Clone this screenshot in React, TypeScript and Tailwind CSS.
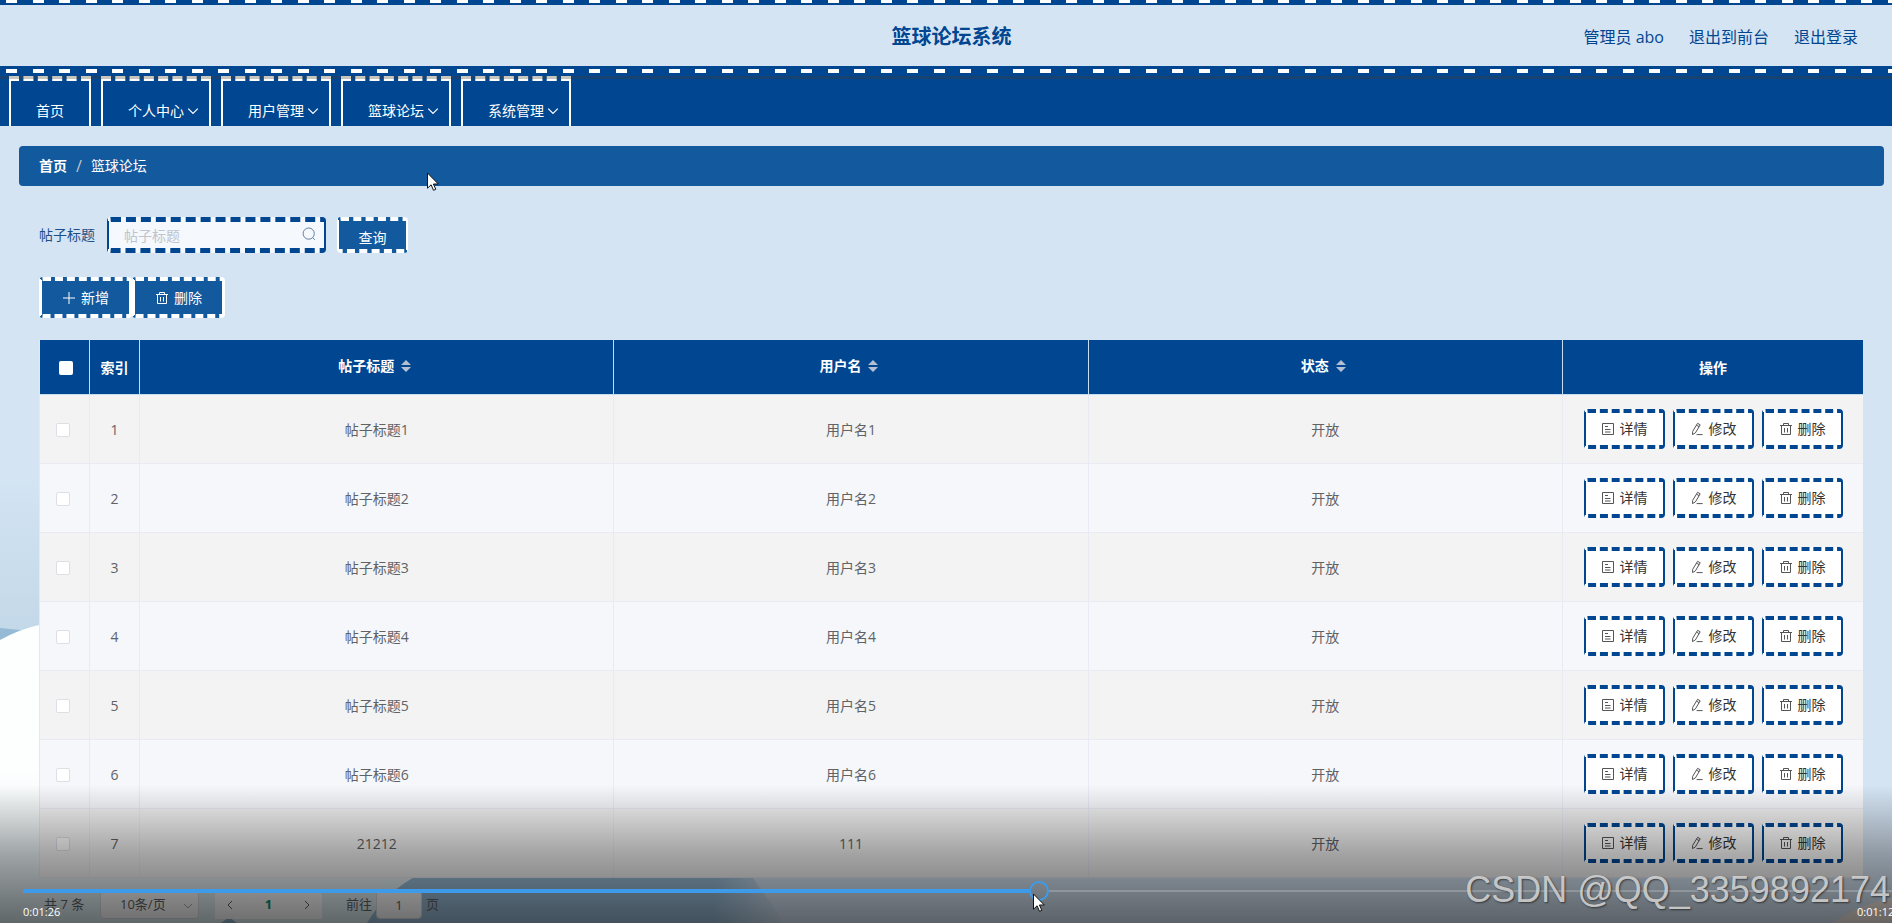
import React from 'react';

const menus = [
  { label: '首页', children: false },
  { label: '个人中心', children: true },
  { label: '用户管理', children: true },
  { label: '篮球论坛', children: true },
  { label: '系统管理', children: true },
];

const rows = [
  { id: 1, title: '帖子标题1', user: '用户名1', status: '开放' },
  { id: 2, title: '帖子标题2', user: '用户名2', status: '开放' },
  { id: 3, title: '帖子标题3', user: '用户名3', status: '开放' },
  { id: 4, title: '帖子标题4', user: '用户名4', status: '开放' },
  { id: 5, title: '帖子标题5', user: '用户名5', status: '开放' },
  { id: 6, title: '帖子标题6', user: '用户名6', status: '开放' },
  { id: 7, title: '21212', user: '111', status: '开放' },
];

const sortable = ['帖子标题', '用户名', '状态'];

type IconProps = { className?: string };

const ChevronIcon = ({ className }: IconProps) => (
  <svg viewBox="0 0 10 10" fill="none" stroke="currentColor" className={className}>
    <path d="M1 3l4 4 4-4" />
  </svg>
);

const SearchIcon = ({ className }: IconProps) => (
  <svg viewBox="0 0 14 14" fill="none" stroke="currentColor" className={className}>
    <circle cx="6.7" cy="6.6" r="5.6" />
    <path d="M10.6 10.6l2.2 2.2" />
  </svg>
);

const PlusIcon = ({ className }: IconProps) => (
  <svg viewBox="0 0 14 14" fill="none" stroke="currentColor" className={className}>
    <path d="M7 1v12M1 7h12" />
  </svg>
);

const TrashIcon = ({ className }: IconProps) => (
  <svg viewBox="0 0 14 14" fill="none" stroke="currentColor" className={className}>
    <path d="M1 3.5h12M2.5 3.5v9h9v-9M4.5 3.5v-2h5v2M5.5 6v4.5M8.5 6v4.5" />
  </svg>
);

const TicketIcon = ({ className }: IconProps) => (
  <svg viewBox="0 0 14 14" fill="none" stroke="currentColor" className={className}>
    <path d="M1.5 1.5h11v11h-11zM4 4.5h3M4 7.5h5.5M4 10h5.5" />
  </svg>
);

const EditIcon = ({ className }: IconProps) => (
  <svg viewBox="0 0 14 14" fill="none" stroke="currentColor" className={className}>
    <path d="M7.6 1.3l2.6 1.5-4.8 8.1-2.9 1.7.2-3.3zM6.5 3.2l2.7 1.5M6.6 12.6h6" />
  </svg>
);

const CaretIcon = ({ className }: IconProps) => (
  <svg viewBox="0 0 10 12" fill="currentColor" className={className}>
    <path d="M5 0l5 5H0zM5 12l5-5H0z" />
  </svg>
);

const PointerIcon = ({ className }: IconProps) => (
  <svg viewBox="0 0 12 19" className={className}>
    <path
      d="M.5 1v15.2l3.6-3.4 2.4 5.5 2.3-1-2.4-5.3h4.9z"
      fill="#fff"
      stroke="#111"
    />
  </svg>
);

const Backdrop = () => (
  <svg
    viewBox="0 0 1892 923"
    preserveAspectRatio="none"
    className="absolute inset-0 -z-10 h-full w-full"
    aria-hidden="true"
  >
    <defs>
      <linearGradient id="hill" x1="0" y1="0" x2="0" y2="1">
        <stop offset="0.5" stopColor="#fdfefe" />
        <stop offset="1" stopColor="#e0eff3" />
      </linearGradient>
      <linearGradient id="lake" x1="0" y1="0" x2="1" y2="0">
        <stop offset="0.84" stopColor="#99bcd6" />
        <stop offset="1" stopColor="#d5e4f3" />
      </linearGradient>
      <linearGradient id="shade" x1="0" y1="0" x2="0" y2="1">
        <stop offset="0" stopColor="#d3e4f3" />
        <stop offset="1" stopColor="#c3d8e8" />
      </linearGradient>
    </defs>
    <rect width="1892" height="923" fill="#d5e4f3" />
    <rect y="480" width="60" height="150" fill="url(#shade)" />
    <path d="M0 628L30 631V660H0z" fill="#95bad6" />
    <path d="M340 860H740L785 923H340z" fill="url(#lake)" />
    <path d="M0 640Q20 629 39 625C200 590 380 700 420 874Q385 892 367 923H0z" fill="url(#hill)" />
    <path d="M221 923l8-6 8 6z" fill="#8fb3cc" />
    <path d="M1832 923Q1860 904 1892 898V923z" fill="#f2e8e0" />
  </svg>
);

// White film-strip perforations
const Perforation = ({ className }: IconProps) => (
  <div
    className={`bg-[repeating-linear-gradient(90deg,transparent_0_6px,#fff_6px_17px,transparent_17px_33px,#fff_33px_44px,transparent_44px_53px)] ${className}`}
  />
);

const actions = [
  { label: '详情', Icon: TicketIcon },
  { label: '修改', Icon: EditIcon },
  { label: '删除', Icon: TrashIcon },
];

const Header: React.FC = () => (
  <header>
    <div className="h-[5px] bg-[#004691]">
      <Perforation className="h-[3px]" />
    </div>
    <div className="grid h-[61px] grid-cols-[1fr_auto_1fr] items-center pt-[2px] pr-[34px] pl-[45px] text-[#004691]">
      <h1 className="col-start-2 text-xl font-bold">篮球论坛系统</h1>
      <div className="flex justify-end gap-[25px] text-base">
        <span>管理员 abo</span>
        <a href="#front">退出到前台</a>
        <a href="#logout">退出登录</a>
      </div>
    </div>
    <nav className="h-[60px] bg-[#004691] pt-[3px]">
      <Perforation className="h-1" />
      {/* Shadow under the strip, falls over the tab tops */}
      <div className="relative mt-[3px] -mb-[3px] h-[3px] bg-[#4a3f2c]/30" />
      <ul className="flex gap-[10px] pl-[9px]">
        {menus.map((menu) => (
          <li key={menu.label}>
            <a
              href="#menu"
              className={`flex h-[50px] items-center border-x-2 border-t-[5px] border-white pt-[15px] text-sm text-white [border-style:dashed_solid] ${
                menu.children ? 'w-[110px] pl-[25px]' : 'w-[82px] justify-center'
              }`}
            >
              {menu.label}
              {menu.children && <ChevronIcon className="ml-[3px] size-3" />}
            </a>
          </li>
        ))}
      </ul>
    </nav>
  </header>
);

const PostTable: React.FC = () => (
  <table className="mt-[22px] w-full table-fixed border-separate border-spacing-0 border-l border-[#e3e8f2] text-center text-sm text-[#606266]">
    <colgroup>
      <col className="w-[50px]" />
      <col className="w-[50px]" />
      <col />
      <col />
      <col />
      <col className="w-[300px]" />
    </colgroup>
    <thead>
      <tr className="h-[55px] bg-[#004691] text-white">
        <th className="border-r border-b border-[#c6dcf0] p-0 pt-[2px] pl-[2px]">
          <input
            type="checkbox"
            aria-label="全选"
            className="mx-auto block size-[14px] appearance-none rounded-xs bg-white"
          />
        </th>
        <th className="border-r border-b border-[#c6dcf0] p-0 pt-[2px] font-bold">索引</th>
        {sortable.map((name) => (
          <th key={name} className="border-r border-b border-[#c6dcf0] p-0 pb-[2px] font-bold">
            <button type="button" className="inline-flex items-center">
              {name}
              <CaretIcon className="mr-1 ml-[7px] h-3 w-[10px] text-[#b4bfd2]" />
            </button>
          </th>
        ))}
        <th className="border-b border-[#c6dcf0] p-0 pt-[2px] font-bold">操作</th>
      </tr>
    </thead>
    <tbody>
      {rows.map((row) => (
        <tr key={row.id} className="h-[69px] odd:bg-[#f3f3f3] even:bg-[#f5f7fb]">
          <td className="border-r border-b border-[#e8ebf4] p-0 pt-[2px] pr-[3px]">
            <input
              type="checkbox"
              aria-label={`选择 ${row.title}`}
              className="mx-auto block size-[14px] appearance-none rounded-xs border border-[#dcdfe6] bg-white"
            />
          </td>
          <td className="border-r border-b border-[#e8ebf4] p-0 pt-[2px]">{row.id}</td>
          <td className="border-r border-b border-[#e8ebf4] p-0 pt-[2px]">{row.title}</td>
          <td className="border-r border-b border-[#e8ebf4] p-0 pt-[2px]">{row.user}</td>
          <td className="border-r border-b border-[#e8ebf4] p-0 pt-[2px]">{row.status}</td>
          <td className="border-b border-[#e8ebf4] p-0">
            <div className="flex justify-center gap-2">
              {actions.map(({ label, Icon }) => (
                <button
                  key={label}
                  type="button"
                  className="flex h-10 w-[81px] items-center justify-center gap-[5px] rounded border-x-2 border-y-4 border-[#004691] bg-white text-[#333] [border-style:dashed_solid]"
                >
                  <Icon className="size-[14px] text-[#555]" />
                  {label}
                </button>
              ))}
            </div>
          </td>
        </tr>
      ))}
    </tbody>
  </table>
);

const Pagination: React.FC = () => (
  <div className="flex items-center pt-[13px] pl-[5px] text-[13px] text-[#606266]">
    <span className="w-[56px]">共 7 条</span>
    <div className="relative">
      <select
        aria-label="每页条数"
        className="h-7 w-[99px] appearance-none rounded-sm border border-[#dcdfe6] bg-white pl-[19px] text-[13px]"
      >
        <option>10条/页</option>
      </select>
      <ChevronIcon className="absolute top-[10px] right-[6px] size-[10px] text-[#a8abb2]" />
    </div>
    <div className="ml-4 flex h-7 w-[107px] items-center justify-between bg-white px-[10px]">
      <button type="button" aria-label="上一页">
        <ChevronIcon className="size-[10px] rotate-90" />
      </button>
      <button type="button" className="font-bold text-[#00966e]">
        1
      </button>
      <button type="button" aria-label="下一页">
        <ChevronIcon className="size-[10px] -rotate-90" />
      </button>
    </div>
    <label className="ml-6 flex items-center gap-1">
      前往
      <input
        type="text"
        defaultValue="1"
        className="h-7 w-[46px] rounded-sm border border-[#dcdfe6] bg-white text-center"
      />
      页
    </label>
  </div>
);

const PlayerBar: React.FC = () => (
  <div className="absolute inset-x-0 bottom-0 flex h-[138px] flex-col justify-end overflow-hidden bg-linear-to-b from-transparent via-black/33 via-50% to-black/57">
    <div className="relative flex items-center pl-[23px]">
      <div className="h-1 w-[1006px] shrink bg-[#3d9be9]" />
      <div className="size-5 shrink-0 rounded-full border-2 border-[#3d9be9]" />
      <div className="h-[2px] flex-1 bg-white/20" />
      <input
        type="range"
        aria-label="播放进度"
        defaultValue={54}
        className="absolute inset-0 w-full opacity-0"
      />
    </div>
    <div className="flex justify-between pl-[23px] text-[11px] leading-[22px] text-white">
      <span>0:01:26</span>
      <span className="w-[35px] whitespace-nowrap">0:01:12</span>
    </div>
  </div>
);

const App: React.FC = () => {
  return (
    <div className="relative isolate h-screen overflow-hidden font-['Open_Sans','Noto_Sans_CJK_SC',sans-serif]">
      <Backdrop />
      <Header />

      <main className="pr-[29px] pl-[39px]">
        {/* Breadcrumb */}
        <div className="mt-5 -mr-[21px] -ml-[20px] flex h-10 items-center gap-[9px] rounded bg-[#12599e] px-5 text-sm text-white">
          <a href="#home" className="font-bold">
            首页
          </a>
          <span className="text-base text-[#c0c4cc]">/</span>
          <span>篮球论坛</span>
        </div>

        {/* Search */}
        <form className="mt-[31px] flex items-center text-sm">
          <label htmlFor="title" className="text-[#1c4f86]">
            帖子标题
          </label>
          <div className="relative ml-3">
            <input
              id="title"
              type="text"
              placeholder="帖子标题"
              className="block h-9 w-[219px] rounded border-x-2 border-y-[5px] border-[#004691] bg-[#f5f8fc] pl-[15px] [border-style:dashed_solid] placeholder:text-[#c0c4cc]"
            />
            <SearchIcon className="absolute top-[10px] right-[10px] size-[14px] text-[#5d7fa8]" />
          </div>
          <button
            type="button"
            className="ml-[11px] h-9 w-[71px] rounded border-x-2 border-y-4 border-white bg-[#12599e] pt-[6px] leading-5 text-white [border-style:dashed_solid]"
          >
            查询
          </button>
        </form>

        <div className="mt-6 flex text-sm text-white">
          <button
            type="button"
            className="flex h-[41px] w-[93px] items-center justify-center gap-[5px] rounded border-x-3 border-y-4 border-white bg-[#12599e] [border-style:dashed_solid]"
          >
            <PlusIcon className="size-[14px]" />
            新增
          </button>
          <button
            type="button"
            className="flex h-[41px] w-[93px] items-center justify-center gap-[5px] rounded border-x-3 border-y-4 border-white bg-[#12599e] [border-style:dashed_solid]"
          >
            <TrashIcon className="size-[14px]" />
            删除
          </button>
        </div>

        <PostTable />
        <Pagination />
      </main>

      <PlayerBar />

      {/* Watermark */}
      <p className="absolute right-[2px] bottom-[13px] font-['Liberation_Sans',sans-serif] text-4xl text-[#d6d6d6]/90 [text-shadow:1px_1px_2px_#0008]">
        CSDN @QQ_3359892174
      </p>

      <PointerIcon className="absolute top-[172px] left-[427px] h-[19px] w-3" />
      <PointerIcon className="absolute top-[893px] left-[1033px] h-[19px] w-3" />
    </div>
  );
};

export default App;
